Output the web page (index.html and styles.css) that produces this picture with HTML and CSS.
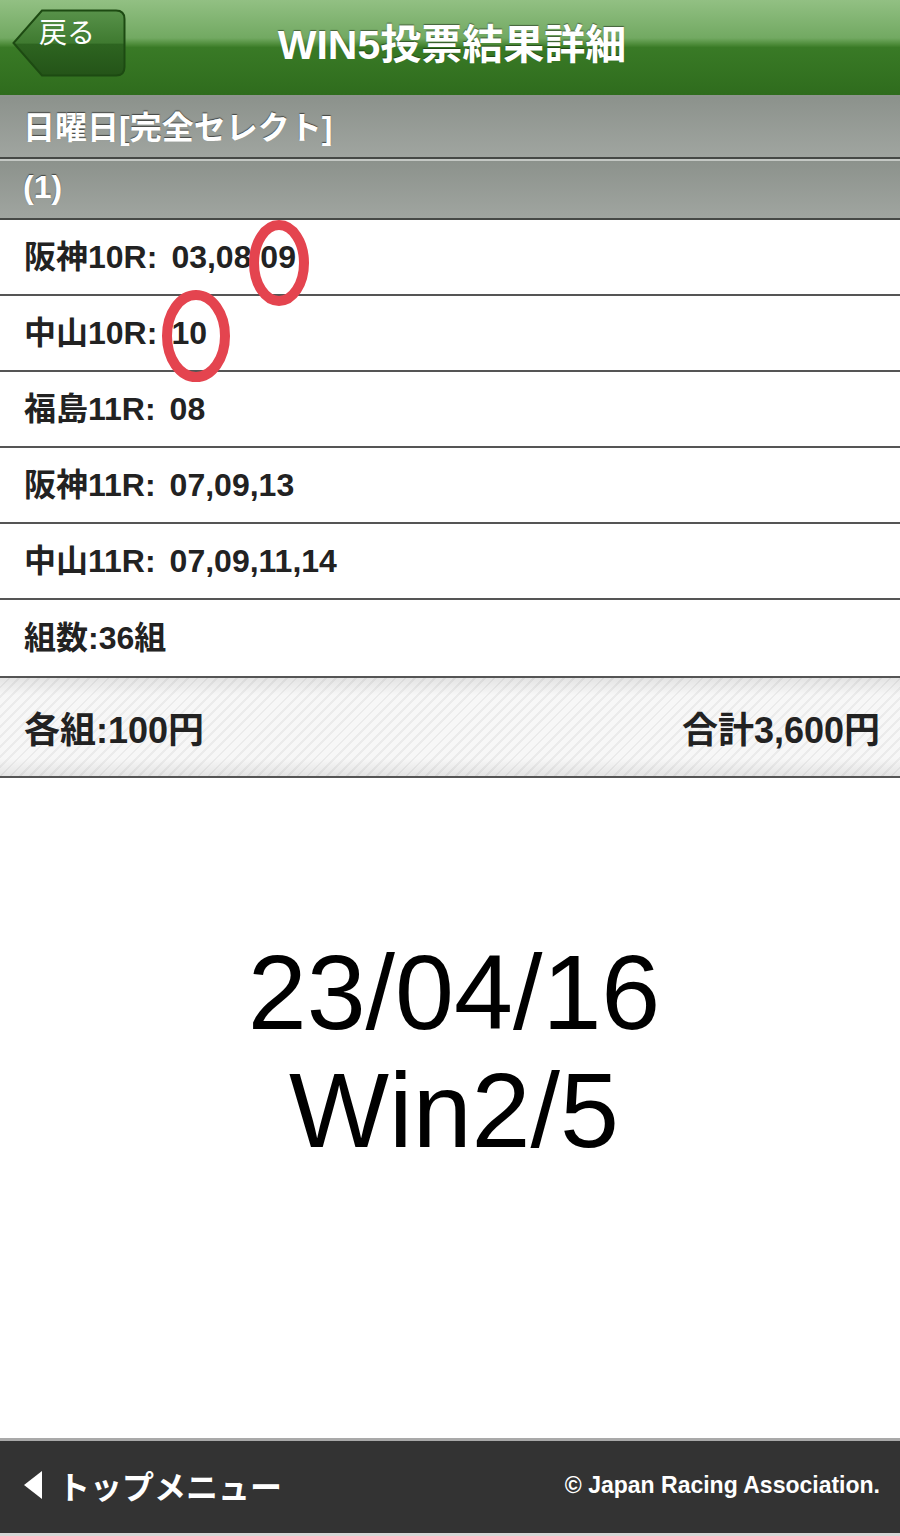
FILE: index.html
```html
<!DOCTYPE html>
<html lang="ja">

<head>
    <meta charset="UTF-8">
    <meta name="viewport" content="width=device-width, initial-scale=1.0">
    <title>WIN5投票結果詳細</title>
    <link rel="stylesheet" href="styles.css">
</head>

<body>
    <div class="header">
        <div class="back-btn">
            <svg class="back-shape" width="116" height="70" viewBox="0 0 116 70">
                <defs>
                    <linearGradient id="btnGrad" x1="0" y1="0" x2="0" y2="1">
                        <stop offset="0" stop-color="#58924a"/>
                        <stop offset="0.5" stop-color="#3f7a30"/>
                        <stop offset="0.52" stop-color="#2d6420"/>
                        <stop offset="1" stop-color="#245418"/>
                    </linearGradient>
                </defs>
                <path d="M31 1.5 L105 1.5 Q113.5 1.5 113.5 10 L113.5 58 Q113.5 66.5 105 66.5 L31 66.5 L2.5 34 Z"
                      fill="url(#btnGrad)" stroke="#1d4a12" stroke-width="2"/>
            </svg>
            <span class="back-label">戻る</span>
        </div>
        <div class="title">WIN5投票結果詳細</div>
    </div>

    <div class="section-head day">日曜日[完全セレクト]</div>
    <div class="section-head num">(1)</div>

    <!-- bet lines -->
    <div class="bet-list">
        <div class="bet-row">阪神10R:<span class="picks">03,08,09</span></div>
        <div class="bet-row">中山10R:<span class="picks">10</span></div>
        <div class="bet-row">福島11R:<span class="picks">08</span></div>
        <div class="bet-row">阪神11R:<span class="picks">07,09,13</span></div>
        <div class="bet-row">中山11R:<span class="picks">07,09,11,14</span></div>
        <div class="bet-row count">組数:36組</div>

        <svg class="marks" width="900" height="170" viewBox="0 0 900 170">
            <ellipse cx="279" cy="43" rx="25" ry="38" fill="none" stroke="#e4444f" stroke-width="10"/>
            <ellipse cx="196" cy="116" rx="29" ry="41" fill="none" stroke="#e4444f" stroke-width="10"/>
        </svg>
    </div>

    <div class="total-row">
        <span>各組:100円</span>
        <span>合計3,600円</span>
    </div>

    <div class="memo">
        <div>23/04/16</div>
        <div>Win2/5</div>
    </div>

    <div class="footer">
        <div class="top-menu"><span class="tri"></span>トップメニュー</div>
        <div class="copyright">© Japan Racing Association.</div>
    </div>
</body>

</html>
```

FILE: styles.css
```css
body {
    margin: 0;
    width: 900px;
    font-family: "Liberation Sans", "Noto Sans CJK JP", sans-serif;
    background: #fff;
}

.header {
    position: relative;
    height: 97px;
    box-sizing: border-box;
    background: linear-gradient(#92c083 0%, #72a962 40%, #4b8a37 47%, #397a26 50%, #2f6c1d 100%);
    border-bottom: 2px solid #8e948e;
    display: flex;
    align-items: center;
    justify-content: center;
}

.back-btn {
    position: absolute;
    left: 11px;
    top: 9px;
    width: 116px;
    height: 70px;
}

.back-shape {
    display: block;
}

.back-label {
    position: absolute;
    left: 28px;
    top: 2px;
    color: #fff;
    font-size: 28px;
    font-family: "Noto Sans CJK JP", sans-serif;
    font-weight: 400;
}

.title {
    color: #fff;
    font-size: 41px;
    font-weight: bold;
    margin-top: -14px;
    margin-left: 4px;
    text-shadow: 0 -1px 1px rgba(0, 0, 0, 0.45);
}

.section-head {
    padding-left: 23px;
    padding-bottom: 5px;
    box-sizing: border-box;
    display: flex;
    align-items: center;
    color: #fff;
    font-size: 32px;
    font-weight: bold;
    background: linear-gradient(#8c928c, #a0a5a0);
    border-bottom: 2px solid #464946;
    text-shadow: 0 -1px 1px rgba(0, 0, 0, 0.55);
}

.section-head.day {
    height: 62px;
}

.section-head.num {
    height: 61px;
    border-top: 2px solid #c4c8c4;
}

.bet-list {
    position: relative;
}

.bet-row {
    height: 76px;
    box-sizing: border-box;
    padding-left: 24px;
    line-height: 75px;
    font-size: 32px;
    font-weight: bold;
    color: #222;
    border-bottom: 2px solid #555;
    white-space: nowrap;
}

.bet-row.count {
    height: 78px;
    line-height: 76px;
}

.picks {
    margin-left: 14px;
}

.marks {
    position: absolute;
    left: 0;
    top: 0;
}

.total-row {
    height: 100px;
    box-sizing: border-box;
    padding: 0 20px 0 24px;
    display: flex;
    align-items: center;
    justify-content: space-between;
    font-size: 36px;
    font-weight: bold;
    color: #222;
    background:
        linear-gradient(rgba(0, 0, 0, 0.08), rgba(0, 0, 0, 0) 18%, rgba(0, 0, 0, 0) 82%, rgba(0, 0, 0, 0.08)),
        repeating-linear-gradient(-45deg, #f7f7f7 0 5px, #ebebeb 5px 7px);
    border-bottom: 2px solid #555;
}

.memo {
    height: 660px;
    display: flex;
    flex-direction: column;
    align-items: center;
    justify-content: center;
    font-size: 106px;
    line-height: 118px;
    color: #000;
    padding: 0 0 114px 8px;
    box-sizing: border-box;
}

.footer {
    height: 99px;
    box-sizing: border-box;
    background: #333;
    border-top: 3px solid #a9a9a9;
    border-bottom: 4px solid #d6d6d6;
    display: flex;
    align-items: center;
    justify-content: space-between;
    padding: 0 20px 4px 24px;
    color: #fff;
}

.top-menu {
    display: flex;
    align-items: center;
    font-size: 32px;
    font-weight: bold;
    font-family: "Noto Sans CJK JP", sans-serif;
}

.tri {
    width: 0;
    height: 0;
    border-top: 14px solid transparent;
    border-bottom: 14px solid transparent;
    border-right: 18px solid #fff;
    margin-right: 16px;
}

.copyright {
    font-size: 23px;
    font-weight: bold;
}
```
